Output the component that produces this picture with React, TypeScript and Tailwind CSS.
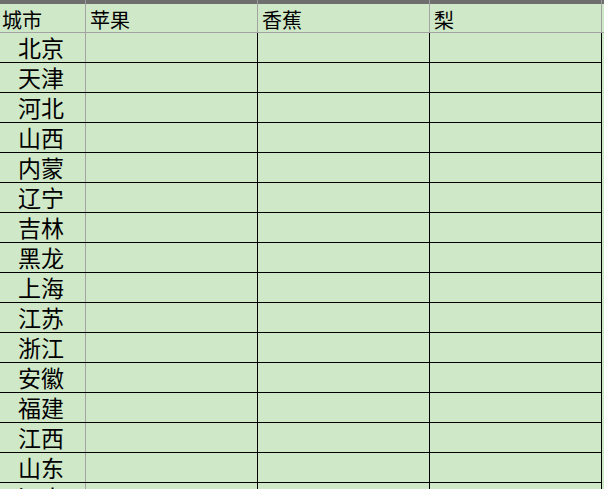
import React from "react";

const cities = [
  "北京",
  "天津",
  "河北",
  "山西",
  "内蒙",
  "辽宁",
  "吉林",
  "黑龙",
  "上海",
  "江苏",
  "浙江",
  "安徽",
  "福建",
  "江西",
  "山东",
  "河南",
];

export default function App() {
  return (
    <div className="w-[604px] h-[489px] overflow-hidden bg-[#cfe8c8] font-['Noto_Sans_CJK_SC',sans-serif] text-black">
      {/* top bar */}
      <div className="flex h-[4px] bg-[#6e6e6e]">
        <div className="w-[86px] border-r border-[#9c9c9c]" />
        <div className="w-[172px] border-r border-[#9c9c9c]" />
        <div className="w-[172px] border-r border-[#9c9c9c]" />
        <div className="w-[172px] border-r border-[#9c9c9c]" />
        <div className="flex-1" />
      </div>
      {/* header */}
      <div className="flex h-[29px] border-b border-[#a3a3a3] text-[20px] leading-[24px]">
        <div className="w-[86px] border-r border-[#a3a3a3] flex items-end pl-[2px]">城市</div>
        <div className="w-[172px] border-r border-[#a3a3a3] flex items-end pl-[4px]">苹果</div>
        <div className="w-[172px] border-r border-[#a3a3a3] flex items-end pl-[4px]">香蕉</div>
        <div className="w-[172px] border-r border-[#a3a3a3] flex items-end pl-[4px]">梨</div>
        <div className="flex-1" />
      </div>
      {/* body */}
      {cities.map((c) => (
        <div key={c} className="flex w-[602px] h-[30px] border-b border-black">
          <div className="w-[86px] border-r border-[#a3a3a3] flex items-center justify-center pr-[3px] text-[23px] leading-[23px]">
            {c}
          </div>
          <div className="w-[172px] border-r border-black" />
          <div className="w-[172px] border-r border-black" />
          <div className="w-[172px] border-r border-black" />
        </div>
      ))}
    </div>
  );
}
